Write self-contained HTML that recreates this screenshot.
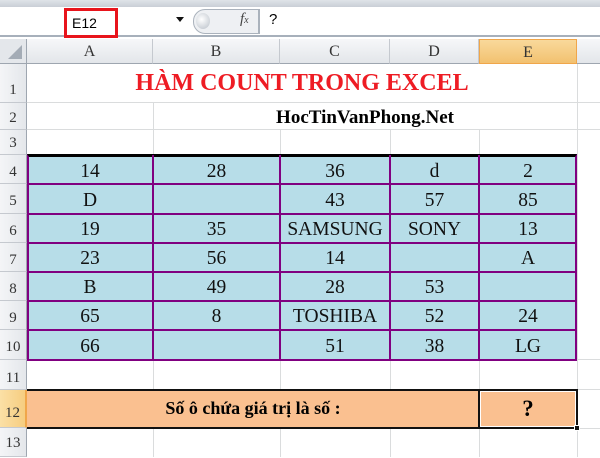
<!DOCTYPE html>
<html><head><meta charset="utf-8"><style>
*{margin:0;padding:0;box-sizing:border-box}
body{width:600px;height:457px;overflow:hidden;background:#fff;position:relative;font-family:"Liberation Serif",serif}
.a{position:absolute}
.ch{position:absolute;top:39px;height:25px;background:linear-gradient(#f6f7f9,#e3e6ea);border-right:1px solid #c5c9cf;border-bottom:1px solid #9ea6b0;font-size:16px;color:#333;text-align:center;line-height:25px}
.rh{position:absolute;left:0;width:27px;background:linear-gradient(90deg,#f4f5f7,#e4e7eb);border-bottom:1px solid #c5c9cf;border-right:1px solid #9ea6b0;font-size:15px;color:#333;text-align:center}
.vl{position:absolute;top:64px;width:1px;height:393px;background:#dadcdd}
.hl{position:absolute;left:27px;width:573px;height:1px;background:#dadcdd}
.c{position:absolute;font-size:19.5px;color:#111;text-align:center}
</style></head><body>
<div class="a" style="left:0;top:0;width:600px;height:7px;background:linear-gradient(#dfe3e8,#c9ced6)"></div>
<div class="a" style="left:0;top:7px;width:600px;height:30px;background:#fff;border-bottom:2px solid #a7b0bb"></div>
<div class="a" style="left:64px;top:8px;width:54px;height:30px;border:3px solid #e8141c;font-family:'Liberation Sans',sans-serif;font-size:14px;line-height:24px;padding-left:5px">E12</div>
<div class="a" style="left:176px;top:17px;width:0;height:0;border-left:4px solid transparent;border-right:4px solid transparent;border-top:5px solid #111"></div>
<div class="a" style="left:193px;top:9px;width:66px;height:25px;border:1px solid #aab2bc;border-radius:12px 0 0 12px;background:#eef0f3"></div>
<div class="a" style="left:196px;top:13px;width:14px;height:16px;border-radius:50%;background:radial-gradient(circle at 40% 40%,#fff,#b8bfc8)"></div>
<div class="a" style="left:240px;top:11px;font-style:italic;font-size:15px;color:#444">f<span style="font-size:10px">x</span></div>
<div class="a" style="left:259px;top:9px;width:1px;height:25px;background:#aab2bc"></div>
<div class="a" style="left:269px;top:11px;font-family:'Liberation Sans',sans-serif;font-size:15px">?</div>

<div class="a" style="left:0;top:39px;width:27px;height:25px;background:#e4e7eb;border-right:1px solid #9ea6b0;border-bottom:1px solid #9ea6b0"></div>
<div class="a" style="left:8px;top:45px;width:0;height:0;border-left:14px solid transparent;border-bottom:14px solid #a4acb6"></div>
<div class="ch" style="left:27px;width:126px">A</div>
<div class="ch" style="left:153px;width:127px">B</div>
<div class="ch" style="left:280px;width:110px">C</div>
<div class="ch" style="left:390px;width:89px">D</div>
<div class="ch" style="left:479px;width:98px;background:linear-gradient(#f9d99b,#f2c170);border:1px solid #f0a64a">E</div>
<div class="ch" style="left:577px;width:23px;border-right:none"></div>

<div class="vl" style="left:153px"></div><div class="vl" style="left:280px"></div><div class="vl" style="left:390px"></div><div class="vl" style="left:479px"></div><div class="vl" style="left:577px"></div>
<div class="hl" style="top:102px"></div><div class="hl" style="top:129px"></div><div class="hl" style="top:359px"></div><div class="hl" style="top:389px"></div><div class="hl" style="top:428px"></div>
<div class="a" style="left:27px;top:64px;width:550px;height:38px;background:#fff"></div>
<div class="a" style="left:154px;top:103px;width:423px;height:26px;background:#fff"></div>

<div class="rh" style="top:64px;height:39px;line-height:52px">1</div>
<div class="rh" style="top:103px;height:27px;line-height:30px">2</div>
<div class="rh" style="top:130px;height:25px;line-height:26px">3</div>
<div class="rh" style="top:155px;height:29px;line-height:34px">4</div>
<div class="rh" style="top:184px;height:30px;line-height:34px">5</div>
<div class="rh" style="top:214px;height:29px;line-height:34px">6</div>
<div class="rh" style="top:243px;height:29px;line-height:34px">7</div>
<div class="rh" style="top:272px;height:29px;line-height:34px">8</div>
<div class="rh" style="top:301px;height:29px;line-height:34px">9</div>
<div class="rh" style="top:330px;height:30px;line-height:34px">10</div>
<div class="rh" style="top:360px;height:30px;line-height:36px">11</div>
<div class="rh" style="top:390px;height:38px;line-height:46px;background:linear-gradient(90deg,#fbe0a6,#f6cd80);border-right:2px solid #f0a64a">12</div>
<div class="rh" style="top:428px;height:29px;line-height:30px">13</div>

<div class="a" style="left:27px;top:70px;width:550px;text-align:center;font-weight:bold;font-size:24px;color:#ee1c24">HÀM COUNT TRONG EXCEL</div>
<div class="a" style="left:153px;top:107px;width:424px;text-align:center;font-weight:bold;font-size:19px;color:#000">HocTinVanPhong.Net</div>

<div class="a" style="left:27px;top:154px;width:550px;height:207px;background:#b7dde8;border:2px solid #800080;border-top:3px solid #000"></div>
<div class="a" style="left:152px;top:155px;width:2px;height:206px;background:#800080"></div>
<div class="a" style="left:279px;top:155px;width:2px;height:206px;background:#800080"></div>
<div class="a" style="left:389px;top:155px;width:2px;height:206px;background:#800080"></div>
<div class="a" style="left:478px;top:155px;width:2px;height:206px;background:#800080"></div>
<div class="a" style="left:27px;top:183px;width:550px;height:2px;background:#800080"></div>
<div class="a" style="left:27px;top:213px;width:550px;height:2px;background:#800080"></div>
<div class="a" style="left:27px;top:242px;width:550px;height:2px;background:#800080"></div>
<div class="a" style="left:27px;top:271px;width:550px;height:2px;background:#800080"></div>
<div class="a" style="left:27px;top:300px;width:550px;height:2px;background:#800080"></div>
<div class="a" style="left:27px;top:329px;width:550px;height:2px;background:#800080"></div>

<div class="c" style="left:27px;width:126px;top:161px">14</div><div class="c" style="left:153px;width:127px;top:161px">28</div><div class="c" style="left:280px;width:110px;top:161px">36</div><div class="c" style="left:390px;width:89px;top:161px">d</div><div class="c" style="left:479px;width:98px;top:161px">2</div>
<div class="c" style="left:27px;width:126px;top:190px">D</div><div class="c" style="left:280px;width:110px;top:190px">43</div><div class="c" style="left:390px;width:89px;top:190px">57</div><div class="c" style="left:479px;width:98px;top:190px">85</div>
<div class="c" style="left:27px;width:126px;top:219px">19</div><div class="c" style="left:153px;width:127px;top:219px">35</div><div class="c" style="left:280px;width:110px;top:219px">SAMSUNG</div><div class="c" style="left:390px;width:89px;top:219px">SONY</div><div class="c" style="left:479px;width:98px;top:219px">13</div>
<div class="c" style="left:27px;width:126px;top:248px">23</div><div class="c" style="left:153px;width:127px;top:248px">56</div><div class="c" style="left:280px;width:110px;top:248px">14</div><div class="c" style="left:479px;width:98px;top:248px">A</div>
<div class="c" style="left:27px;width:126px;top:277px">B</div><div class="c" style="left:153px;width:127px;top:277px">49</div><div class="c" style="left:280px;width:110px;top:277px">28</div><div class="c" style="left:390px;width:89px;top:277px">53</div>
<div class="c" style="left:27px;width:126px;top:306px">65</div><div class="c" style="left:153px;width:127px;top:306px">8</div><div class="c" style="left:280px;width:110px;top:306px">TOSHIBA</div><div class="c" style="left:390px;width:89px;top:306px">52</div><div class="c" style="left:479px;width:98px;top:306px">24</div>
<div class="c" style="left:27px;width:126px;top:336px">66</div><div class="c" style="left:280px;width:110px;top:336px">51</div><div class="c" style="left:390px;width:89px;top:336px">38</div><div class="c" style="left:479px;width:98px;top:336px">LG</div>

<div class="a" style="left:27px;top:389px;width:452px;height:40px;background:#fac090;border-top:2px solid #111;border-bottom:2px solid #111"></div>
<div class="a" style="left:27px;top:398px;width:452px;text-align:center;font-weight:bold;font-size:18px">Số ô chứa giá trị là số :</div>
<div class="a" style="left:478px;top:389px;width:100px;height:40px;background:#fac090;border:2px solid #111;box-shadow:inset 0 0 0 1px #fff"></div>
<div class="a" style="left:478px;top:396px;width:100px;text-align:center;font-weight:bold;font-size:23px">?</div>
<div class="a" style="left:574px;top:425px;width:6px;height:6px;background:#111;border:1px solid #fff"></div>
</body></html>
